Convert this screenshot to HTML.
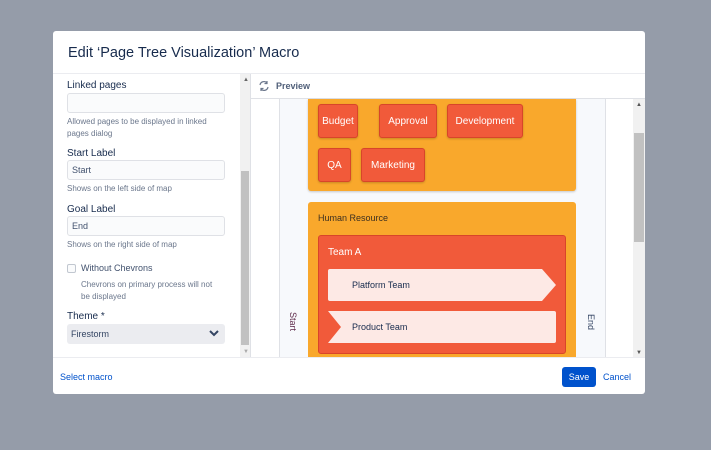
<!DOCTYPE html>
<html><head><style>
*{box-sizing:border-box;margin:0;padding:0}
body{width:711px;height:450px;background:#959ca9;font-family:"Liberation Sans",sans-serif;position:relative;overflow:hidden;color:#172b4d}
.a{position:absolute}
.dlg{left:53px;top:31px;width:592px;height:363px;background:#fff;border-radius:3px}
.lbl{font-size:10px;color:#172b4d}
.help{font-size:8px;color:#6b778c;line-height:12px}
.inp{height:20px;border:1px solid #dfe1e6;background:#fafbfc;border-radius:3px;font-size:9px;padding:4px 4px;color:#42526e}
.btn{background:#f15a3a;border:1px solid #d8452a;border-radius:3px;color:#fff;font-size:10px;display:flex;align-items:center;justify-content:center;height:34px;box-shadow:0 1px 2px rgba(0,0,0,.2)}
</style></head><body>
<div class="a dlg">
 <div class="a" style="left:15px;top:14px;font-size:14.5px;color:#172b4d">Edit ‘Page Tree Visualization’ Macro</div>
 <div class="a" style="left:0;top:42px;width:592px;height:1px;background:#ebecf0"></div>
 <div class="a" style="left:0;top:326px;width:592px;height:1px;background:#ebecf0"></div>
 <div class="a" style="left:197px;top:43px;width:1px;height:283px;background:#dfe1e6"></div>
</div>
<!-- left pane -->
<div class="a lbl" style="left:67px;top:80px">Linked pages</div>
<div class="a inp" style="left:67px;top:93px;width:158px"></div>
<div class="a help" style="left:67px;top:116px">Allowed pages to be displayed in linked<br>pages dialog</div>
<div class="a lbl" style="left:67px;top:148px">Start Label</div>
<div class="a inp" style="left:67px;top:160px;width:158px">Start</div>
<div class="a help" style="left:67px;top:183px">Shows on the left side of map</div>
<div class="a lbl" style="left:67px;top:204px">Goal Label</div>
<div class="a inp" style="left:67px;top:216px;width:158px">End</div>
<div class="a help" style="left:67px;top:239px">Shows on the right side of map</div>
<div class="a" style="left:67px;top:264px;width:9px;height:9px;border:1px solid #c1c7d0;border-radius:2px;background:#fafbfc"></div>
<div class="a" style="left:81px;top:263px;font-size:9px;color:#42526e">Without Chevrons</div>
<div class="a help" style="left:81px;top:279px">Chevrons on primary process will not<br>be displayed</div>
<div class="a lbl" style="left:67px;top:311px">Theme *</div>
<div class="a" style="left:67px;top:324px;width:158px;height:20px;background:#ebecf0;border-radius:3px;font-size:9px;padding:5px 4px;color:#344563">Firestorm
 <svg class="a" style="right:6px;top:6px" width="10" height="7" viewBox="0 0 10 7"><path d="M1 1l4 4 4-4" stroke="#344563" stroke-width="2" fill="none"/></svg></div>
<div class="a" style="left:240px;top:74px;width:10px;height:283px;background:#f1f1f1"></div>
<div class="a" style="left:241px;top:171px;width:8px;height:174px;background:#c1c1c1"></div>
<div class="a" style="left:243px;top:77px;font-size:6px;color:#666">▲</div>
<div class="a" style="left:243px;top:349px;font-size:6px;color:#aaa">▼</div>
<!-- right pane -->
<div class="a" style="left:251px;top:98px;width:394px;height:1px;background:#dfe1e6"></div>
<svg class="a" style="left:258px;top:80px" width="12" height="12" viewBox="0 0 12 12"><path d="M2 5a4 4 0 0 1 7-2M10 7a4 4 0 0 1-7 2M9 1v2.5H6.5M3 11V8.5h2.5" stroke="#6b778c" stroke-width="1.2" fill="none"/></svg>
<div class="a" style="left:276px;top:81px;font-size:9px;font-weight:bold;color:#505f79">Preview</div>
<div class="a" style="left:279px;top:99px;width:327px;height:258px;background:#f7f9fc;border-left:1px solid #dfe1e6;border-right:1px solid #dfe1e6"></div>
<div class="a" style="transform:rotate(90deg);transform-origin:left top;font-size:9px;color:#5e2a4a;left:298px;top:312px">Start</div>
<div class="a" style="transform:rotate(90deg);transform-origin:left top;font-size:9px;color:#344563;left:596px;top:314px">End</div>
<div class="a" style="left:308px;top:99px;width:268px;height:92px;background:#f9a82c;border-radius:0 0 3px 3px;box-shadow:0 1px 2px rgba(0,0,0,.2)"></div>
<div class="a btn" style="left:318px;top:104px;width:40px">Budget</div>
<div class="a btn" style="left:379px;top:104px;width:58px">Approval</div>
<div class="a btn" style="left:447px;top:104px;width:76px">Development</div>
<div class="a btn" style="left:318px;top:148px;width:33px">QA</div>
<div class="a btn" style="left:361px;top:148px;width:64px">Marketing</div>
<div class="a" style="left:308px;top:202px;width:268px;height:155px;background:#f9a82c;border-radius:3px 3px 0 0"></div>
<div class="a" style="left:318px;top:213px;font-size:9px;color:#3d3020">Human Resource</div>
<div class="a" style="left:318px;top:235px;width:248px;height:119px;background:#f15a3a;border:1px solid #d8452a;border-radius:3px"></div>
<div class="a" style="left:328px;top:247px;font-size:10px;color:#fff">Team A</div>
<svg class="a" style="left:328px;top:269px" width="229" height="75" viewBox="0 0 229 75"><path d="M2 0H214L228 16 214 32H2a2 2 0 0 1-2-2V2a2 2 0 0 1 2-2z" fill="#fde9e5"/><path d="M0 42H226a2 2 0 0 1 2 2V72a2 2 0 0 1-2 2H0L13 58z" fill="#fde9e5"/></svg>
<div class="a" style="left:352px;top:280px;font-size:9px;color:#172b4d">Platform Team</div>
<div class="a" style="left:352px;top:322px;font-size:9px;color:#172b4d">Product Team</div>
<div class="a" style="left:633px;top:99px;width:12px;height:258px;background:#f1f1f1"></div>
<div class="a" style="left:634px;top:133px;width:10px;height:109px;background:#c1c1c1"></div>
<div class="a" style="left:636px;top:102px;font-size:6px;color:#555">▲</div>
<div class="a" style="left:636px;top:350px;font-size:6px;color:#555">▼</div>
<!-- footer -->
<div class="a" style="left:60px;top:372px;font-size:9px;color:#0052cc">Select macro</div>
<div class="a" style="left:562px;top:367px;width:34px;height:20px;background:#0052cc;border-radius:3px;color:#fff;font-size:9px;text-align:center;line-height:20px">Save</div>
<div class="a" style="left:603px;top:372px;font-size:9px;color:#0052cc">Cancel</div>
</body></html>
